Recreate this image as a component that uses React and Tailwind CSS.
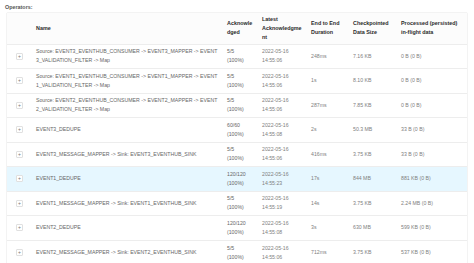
const rows = [
  { name: 'Source: EVENT3_EVENTHUB_CONSUMER -> EVENT3_MAPPER -> EVENT3_VALIDATION_FILTER -> Map', ack: '5/5', time: '14:55:06', dur: '248ms', size: '7.16 KB', proc: '0 B (0 B)' },
  { name: 'Source: EVENT1_EVENTHUB_CONSUMER -> EVENT1_MAPPER -> EVENT1_VALIDATION_FILTER -> Map', ack: '5/5', time: '14:55:06', dur: '1s', size: '8.10 KB', proc: '0 B (0 B)' },
  { name: 'Source: EVENT2_EVENTHUB_CONSUMER -> EVENT2_MAPPER -> EVENT2_VALIDATION_FILTER -> Map', ack: '5/5', time: '14:55:06', dur: '287ms', size: '7.85 KB', proc: '0 B (0 B)' },
  { name: 'EVENT3_DEDUPE', ack: '60/60', time: '14:55:08', dur: '2s', size: '50.3 MB', proc: '33 B (0 B)' },
  { name: 'EVENT3_MESSAGE_MAPPER -> Sink: EVENT3_EVENTHUB_SINK', ack: '5/5', time: '14:55:06', dur: '416ms', size: '3.75 KB', proc: '33 B (0 B)' },
  { name: 'EVENT1_DEDUPE', ack: '120/120', time: '14:55:23', dur: '17s', size: '844 MB', proc: '881 KB (0 B)', active: true },
  { name: 'EVENT1_MESSAGE_MAPPER -> Sink: EVENT1_EVENTHUB_SINK', ack: '5/5', time: '14:55:19', dur: '14s', size: '3.75 KB', proc: '2.24 MB (0 B)' },
  { name: 'EVENT2_DEDUPE', ack: '120/120', time: '14:55:08', dur: '3s', size: '630 MB', proc: '599 KB (0 B)' },
  { name: 'EVENT2_MESSAGE_MAPPER -> Sink: EVENT2_EVENTHUB_SINK', ack: '5/5', time: '14:55:06', dur: '712ms', size: '3.75 KB', proc: '537 KB (0 B)' },
]

const headers = [
  'Name',
  'Acknowledged',
  'Latest Acknowledgment',
  'End to End Duration',
  'Checkpointed Data Size',
  'Processed (persisted) in-flight data',
]

// tiny "+" expand toggle
function ExpandButton() {
  return (
    <span className="mx-auto flex w-[7px] h-[7px] items-center justify-center
      rounded-[1px] border border-[#e0e0e0] bg-white text-[5px] leading-none text-[#777]">
      +
    </span>
  )
}

export default function App() {
  return (
    <div className="w-[474px] h-[263px] overflow-hidden bg-white
      font-['Liberation_Sans',Arial,sans-serif]">

      {/* ── section title ─────────────────────────── */}
      <p className="px-[5px] pt-[4px] text-[5.4px] leading-[7px] font-bold text-[#555]">
        Operators:
      </p>

      {/* ── operators table ───────────────────────── */}
      <div className="mx-[6px] mt-[1px] border border-[#f3f3f3] rounded-[2px]">
        <table className="w-full table-fixed border-collapse text-[5.2px] leading-[9px]">
          <colgroup>
            <col className="w-[25px]" />
            <col className="w-[191px]" />
            <col className="w-[35px]" />
            <col className="w-[49px]" />
            <col className="w-[42px]" />
            <col className="w-[48px]" />
            <col />
          </colgroup>
          <thead>
            <tr className="bg-[#fcfcfc] border-b border-[#ededed]">
              <th className="h-[31px] p-0" />
              {headers.map((h) => (
                <th key={h}
                  className="px-[4px] py-0 text-left align-middle font-bold text-[5.4px]
                    text-[#2b2b2b] break-words">
                  {h}
                </th>
              ))}
            </tr>
          </thead>
          <tbody>
            {rows.map((r) => (
              <tr key={r.name}
                className={`border-b border-[#ededed] last:border-b-0
                  ${r.active ? 'bg-[#e6f7ff]' : ''}`}>
                <td className="h-[24.5px] p-0 align-middle"><ExpandButton /></td>
                <td className="px-[4px] py-0 align-middle text-[#666] break-all">{r.name}</td>
                <td className="px-[4px] py-0 align-middle text-[#666]">
                  {r.ack}<br />(100%)
                </td>
                <td className="px-[4px] py-0 align-middle text-[#808080]">
                  2022-05-16<br />{r.time}
                </td>
                <td className="px-[4px] py-0 align-middle text-[#808080]">{r.dur}</td>
                <td className="px-[4px] py-0 align-middle text-[#808080]">{r.size}</td>
                <td className="px-[4px] py-0 align-middle text-[#808080]">{r.proc}</td>
              </tr>
            ))}
          </tbody>
        </table>
      </div>
    </div>
  )
}
